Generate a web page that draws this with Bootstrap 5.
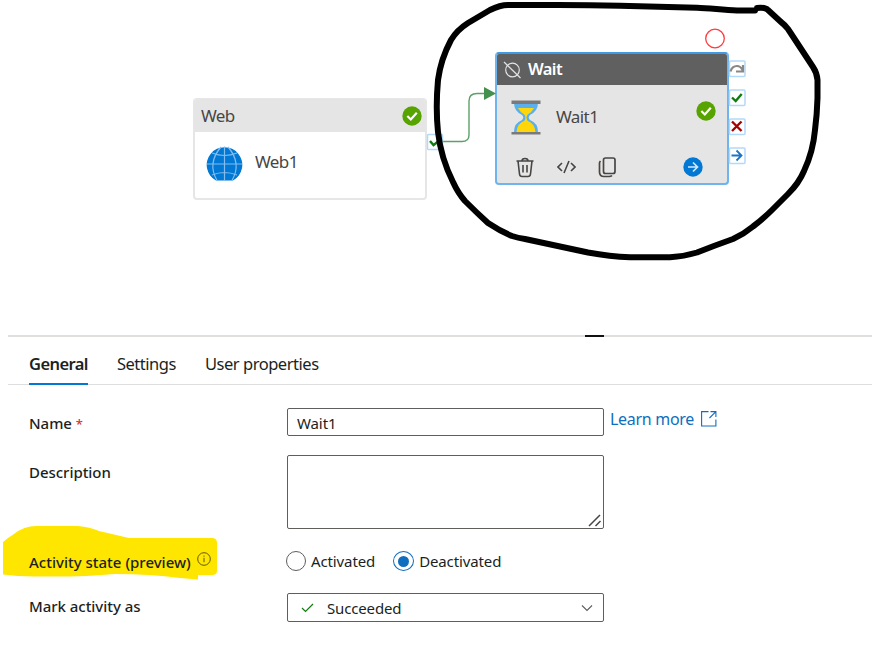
<!DOCTYPE html>
<html lang="en">
<head>
<meta charset="utf-8">
<title>Pipeline activity</title>
<meta name="viewport" content="width=device-width, initial-scale=1">
<link href="https://cdn.jsdelivr.net/npm/bootstrap@5.3.0/dist/css/bootstrap.min.css" rel="stylesheet">
<style>
body{font-family:"Noto Sans","Open Sans",sans-serif;font-size:15px;color:#201f1e;background:#fff;overflow:hidden;line-height:20px}
svg{display:block;flex:none}
.canvas-area{height:335px}
.node{position:absolute;border-radius:4px;overflow:hidden;font-size:17px;letter-spacing:-.6px;color:#484644}
.node-web{left:193px;top:98px;width:234px;height:102px;border:2px solid #e6e6e6;border-top-width:1px;background:#fff}
.web-head{height:33px;background:#e5e5e5;padding:0 3px 0 6px}
.web-body{padding:14px 0 0 11px;gap:12px;line-height:34px}
.web-body span{margin-top:-1px}
.node-wait{left:495px;top:52px;width:234px;height:133px;border:2px solid #6fb4ee;border-top-color:#3f9ae6;background:#e5e5e5}
.wait-head{height:31px;background:#606060;color:#fff;padding-left:6px;gap:6px;font-size:16.5px;font-weight:600}
.wait-head span{margin-top:-2px}
.wait-body{height:54px;padding:10px 11px 0 14px;gap:15px}
.wait-body span{margin-top:-1px}
.wait-done{margin-bottom:12px}
.wait-tools{height:44px;padding:12px 24px 0 18px}
.tool-gap{gap:22px}
.overlay{position:absolute;left:0;top:0}
.panel{margin-left:8px;border-top:2px solid #e1dfdd}
.grip{position:absolute;left:577px;top:-2px;width:19px;height:2px;background:#111}
.tabs-line{height:48px;padding-left:21px;gap:29px;border-bottom:1px solid #dedede;font-size:16.5px;letter-spacing:-.47px}
.tabs-line a{color:#201f1e;text-decoration:none;padding-top:17px;height:48px}
.tabs-line a.on{font-weight:600;letter-spacing:-.58px;border-bottom:2px solid #0078d4}
.form-row{padding-left:21px}
.row-name{padding-top:23px}
.row-desc{padding-top:19px}
.row-state{padding-top:22px}
.row-mark{padding-top:21px}
.lbl{width:258px;font-weight:500;letter-spacing:-.04px}
.lbl-name{padding-top:5px}
.lbl-desc{padding-top:7px}
.lbl-mark{padding-top:3px}
.field{width:317px;border:1px solid #605e5c;border-radius:2px}
.field-name{height:28px;padding:4px 9px;letter-spacing:-.1px}
.field-desc{height:74px;padding:1px}
.field-mark{height:29px;padding:1px 10px 0 13px}
.field-mark span{margin-left:13px;letter-spacing:-.15px}
.t-learn{color:#106ebe;text-decoration:none;font-size:16px;letter-spacing:-.3px;padding:1px 0 0 6px;gap:7px}
.t-learn svg{margin-top:1px}
.req{color:#d13438;font-size:13px}
.state-text{padding-top:1px;letter-spacing:0}
.ring{width:20px;height:20px;border:1px solid #605e5c;border-radius:50%;margin-left:-1px}
.ring.on{border-color:#106ebe;width:21px;margin-left:18px}
.ring.on::after{content:"";width:11px;height:11px;border-radius:50%;background:#106ebe}
.opt{margin-left:5px;letter-spacing:-.12px}
.opts{height:20px}
.hl{position:absolute;left:-26px;top:-26px;z-index:-1}
.lbl-state{gap:6px;z-index:0}
.info-mark{margin-top:1px}
</style>
<script src="https://cdn.jsdelivr.net/npm/bootstrap@5.3.0/dist/js/bootstrap.bundle.min.js"></script>
</head>
<body>
<svg width="0" height="0" class="position-absolute">
  <symbol id="okay" viewBox="0 0 20 20"><circle cx="10" cy="10" r="9.7" fill="#57a300"/><path d="M5.3 10l3.500 3.500 6-6.800" fill="none" stroke="#fff" stroke-width="2.200"/></symbol>
</svg>
<main>
<section class="canvas-area position-relative">
  <div class="node node-web">
    <div class="web-head d-flex align-items-center justify-content-between"><span>Web</span>
      <svg width="20" height="20"><use href="#okay"/></svg></div>
    <div class="web-body d-flex">
      <svg width="37" height="36" viewBox="0 0 37 36"><path d="M10 34.600A17.800 17.800 0 1 1 27 34.600Z" fill="#0078d4"/><g fill="none" stroke="#83bdf0" stroke-width="1.200"><path d="M18.500 .500v34M1 18h35M6 7q12.500 5 25 0M6 29q12.500-5 25 0M15 1Q1 17 11 34.500M22 1Q36 17 26 34.500"/></g></svg>
      <span>Web1</span>
    </div>
  </div>

  <div class="node node-wait">
    <div class="wait-head d-flex align-items-center">
      <svg width="19" height="18" viewBox="0 0 19 18" fill="none" stroke="#e4e4e4" stroke-width="1.200"><circle cx="9.500" cy="9" r="6.800"/><path d="M1 1l16.500 16"/></svg>
      <span>Wait</span>
    </div>
    <div class="wait-body d-flex align-items-center">
      <svg width="30" height="35" viewBox="0 0 30 35"><path d="M3 3H27Q27 11 19 15Q16.500 17.500 19 20Q27 23 27 32H3Q3 23 11 20Q13.500 17.500 11 15Q3 11 3 3Z" fill="#5ab0ee"/><path d="M7 8h16q-2 4-6.300 6.600-2.300 2.800 0 6.400Q23.500 23 24.500 32h-19Q6.500 23 13.300 21q2.300-3.600 0-6.400Q9 12 7 8Z" fill="#ffd60a"/><path d="M.5 .5h29v3.500H.5zM.5 32h29v2.500H.5z" fill="#7a7a7a"/></svg>
      <span>Wait1</span>
      <svg class="ms-auto wait-done" width="20" height="20"><use href="#okay"/></svg>
    </div>
    <div class="wait-tools d-flex align-items-center justify-content-between">
      <div class="d-flex align-items-center tool-gap">
      <svg width="20" height="21" viewBox="0 0 20 21" fill="none" stroke="#484644" stroke-width="1.600"><path d="M1.500 4h17M7 4q0-2.500 3-2.500T13 4M3 4l1.500 13q.3 2.500 2.500 2.500h6q2.200 0 2.500-2.500L17 4M8 8v7.500M12 8v7.500"/></svg>
      <svg width="19" height="16" viewBox="0 0 19 16" fill="none" stroke="#484644" stroke-width="1.600"><path d="M5 4L1 8l4 4M14 4l4 4-4 4M12 2L7 14"/></svg>
      <svg width="19" height="21" viewBox="0 0 19 21" fill="none" stroke="#484644" stroke-width="1.700"><rect x="5.500" y="1" width="11.500" height="15.500" rx="2"/><path d="M2.500 4Q1.500 5 1.500 6v9q0 4.500 4.500 4.500H11q2 0 3-1"/></svg>
      </div>
      <svg width="20" height="20" viewBox="0 0 20 20"><circle cx="10" cy="10" r="9.700" fill="#0078d4"/><path d="M5 10h9.500M10 5.500l4.500 4.500-4.500 4.500" fill="none" stroke="#d3e8fa" stroke-width="1.700"/></svg>
    </div>
  </div>

  <!-- connector, output ports and hand-drawn loop -->
  <svg class="overlay" width="872" height="335" fill="none">
    <path d="M442 141.500H462Q469 141.500 469 135V101Q469 93.500 477 93.500H485" stroke="#5da068" stroke-width="1.400"/>
    <path d="M484 87l12 6.500-12 6.500z" fill="#44914f"/>
    <g fill="#fff" stroke="#b3d9f9" stroke-width="1.500">
      <rect x="427.500" y="134.500" width="15" height="15" rx="1"/>
      <rect x="729.500" y="61" width="15.500" height="15.500" rx="1"/><rect x="729.500" y="90" width="15.500" height="15.500" rx="1"/><rect x="729.500" y="119" width="15.500" height="15.500" rx="1"/><rect x="729.500" y="148" width="15.500" height="15.500" rx="1"/>
    </g>
    <path d="M430 141l3.500 4 6-4.500M732 97.500l3.700 3.500 6-7" stroke="#107c10" stroke-width="2.400"/>
    <path d="M730.500 71.500Q732 66 737 66q3.500 0 5.500 4M743 65v6.500h-7" stroke="#8a8886" stroke-width="2.200"/>
    <path d="M732 121.500l9.500 9.500M741.500 121.500l-9.500 9.500" stroke="#a80000" stroke-width="2.400"/>
    <path d="M731.500 155.500h10M736.500 150.500l5 5-5 5" stroke="#1b74c9" stroke-width="1.800"/>
    <circle cx="715" cy="38.500" r="9.300" stroke="#ff3b3f" stroke-width="1.300"/>
    <path d="M755 10.500H737C722 10 710 8 697 7.700L620 5.700Q590 5 558 5H508Q500 5 490 10L468 23Q457 30 451 40C443 55 440 65 438 80Q435.500 108 438 132C440 150 447 170 453 182Q458 193 465 201Q477 213 488 223 500 231 512 236 518 238 525 239L588 252.500Q610 256.500 630 257.300H670Q684 256.500 697 252.500 716 245 733 239 744 234 753 226.500 763 219 772 210L788 194Q799 183 804 171 813 152 815 130 817 115 817.500 98V80Q817 73 813 67L788 29Q785 25 781 22L768 10Q765 7 757 8" stroke="#000" stroke-width="6" stroke-linecap="round" stroke-linejoin="round"/>
  </svg>
</section>

<section class="panel position-relative">
  <div class="grip"></div>
  <nav class="tabs-line d-flex"><a class="on" href="#">General</a><a href="#">Settings</a><a href="#">User properties</a></nav>

  <div class="form-row row-name d-flex">
    <div class="lbl lbl-name">Name <span class="req">*</span></div>
    <div class="field field-name">Wait1</div>
    <a class="t-learn d-flex" href="#"><span>Learn more</span>
      <svg width="16" height="17" viewBox="0 -1 16 17" fill="none" stroke="#106ebe" stroke-width="1.100"><path d="M7.500 .600H.6v14.400h14.300V8.500M9.500 .600h5.400v5.400M14.900 .600L8.500 7"/></svg></a>
  </div>
  <div class="form-row row-desc d-flex">
    <div class="lbl lbl-desc">Description</div>
    <div class="field field-desc d-flex align-items-end justify-content-end"><svg width="14" height="13" viewBox="0 0 14 13" stroke="#484644" stroke-width="1.500"><path d="M1 12L12 1M7.500 12l5-5"/></svg></div>
  </div>
  <div class="form-row row-state d-flex">
    <div class="lbl lbl-state position-relative d-flex">
      <span class="state-text">Activity state (preview)</span>
      <svg class="info-mark" width="14" height="14" viewBox="0 0 14 14" fill="none" stroke="#605800" stroke-width="1"><circle cx="7" cy="7" r="6.300"/><path d="M7 5.800v4.400M7 3.500v1.200"/></svg>
      <svg class="hl" width="216" height="56" viewBox="3 525 216 56"><path d="M3 542Q9 537 14 534 24 526 36 526H78Q90 527 99 531L129 538H212Q217 538 217 543V571Q217 575 212 575H198V579.500L180 578Q150 574 115 574 85 577 40 576.500 20 577 3 574.500Z" fill="#ffe600"/></svg>
    </div>
    <div class="opts d-flex align-items-center"><i class="ring"></i><span class="opt">Activated</span><i class="ring on d-flex align-items-center justify-content-center"></i><span class="opt">Deactivated</span></div>
  </div>
  <div class="form-row row-mark d-flex">
    <div class="lbl lbl-mark">Mark activity as</div>
    <div class="field field-mark d-flex align-items-center">
      <svg width="13" height="10" viewBox="0 0 13 10" fill="none" stroke="#107c10" stroke-width="1.200"><path d="M1 5l3.500 3.500L12 1"/></svg>
      <span>Succeeded</span>
      <svg class="ms-auto" width="12" height="8" viewBox="0 0 12 8" fill="none" stroke="#605e5c" stroke-width="1.100"><path d="M1 1.500l5 5 5-5"/></svg>
    </div>
  </div>
</section>
</main>
</body>
</html>
